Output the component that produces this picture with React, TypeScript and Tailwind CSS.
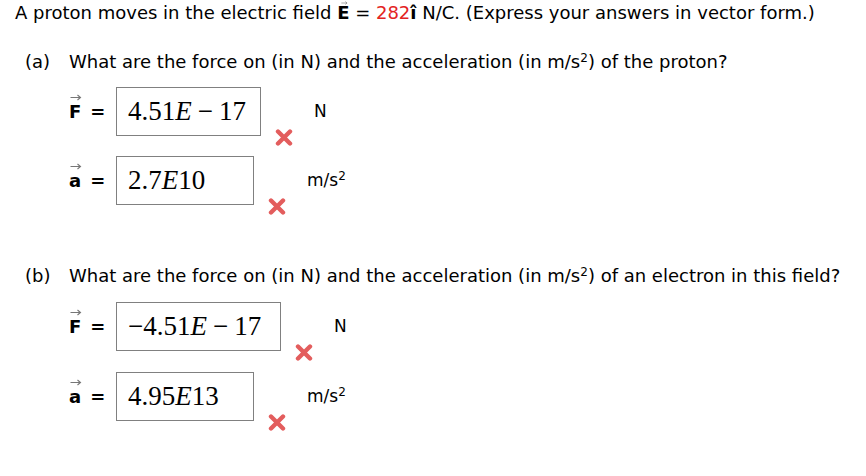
function Arrow({ className }: { className: string }) {
  return (
    <svg viewBox="0 0 12 7" className={`absolute ${className}`}>
      <path d="M0.5 3.5 H10.5 M7.5 1 L10.5 3.5 L7.5 6" stroke="#777" strokeWidth="1.1" fill="none" />
    </svg>
  );
}

function Vec({ letter, arrow = "w-[12px] h-[7px] left-[1px] -top-[4px]" }: { letter: string; arrow?: string }) {
  return (
    <span className="relative inline-block font-bold">
      <Arrow className={arrow} />
      {letter}
    </span>
  );
}

function Cross() {
  return (
    <svg width="18" height="17" viewBox="0 0 18 17" className="block">
      <path d="M3 2.5 L15 14.5 M15 2.5 L3 14.5" stroke="#e35d5d" strokeWidth="4.4" strokeLinecap="round" />
    </svg>
  );
}

function Answer({
  sym,
  value,
  width,
  unit,
}: {
  sym: string;
  value: React.ReactNode;
  width: string;
  unit: React.ReactNode;
}) {
  return (
    <div className="flex items-center h-[49px] pl-[69px]">
      <div className="flex items-center w-[47px] text-[18px]">
        <Vec letter={sym} />
        <span className="ml-[9px] font-bold">=</span>
      </div>
      <div
        className={`${width} h-[49px] border border-[#808080] flex items-center pl-[11px] text-[27px] font-['Liberation_Serif',serif] leading-none`}
      >
        {value}
      </div>
      <div className="self-end translate-y-[10px] ml-[14px]">
        <Cross />
      </div>
      <div className="ml-[21px] text-[17px]">{unit}</div>
    </div>
  );
}

function Num({ mant, exp, neg }: { mant: string; exp: string; neg?: boolean }) {
  return (
    <span>
      {mant}
      <i>E</i>
      {neg && <span className="mx-[6px]">−</span>}
      {exp}
    </span>
  );
}

const ms2 = (
  <span>
    m/s<sup className="text-[12px]">2</sup>
  </span>
);

export default function App() {
  return (
    <div className="w-[866px] h-[476px] bg-white text-black font-['DejaVu_Sans',Verdana,sans-serif] text-[18px] pt-[2px]">
      <p className="pl-[15px] leading-[22px]">
        A proton moves in the electric field{" "}
        <Vec letter="E" arrow="w-[7px] h-[4px] left-[4px] -top-[1px]" /> = <span className="text-[#e32323]">282</span>
        <b>î</b> N/C. (Express your answers in vector form.)
      </p>

      <div className="flex mt-[27px] leading-[22px]">
        <span className="pl-[25px] w-[69px]">(a)</span>
        <span>
          What are the force on (in N) and the acceleration (in m/s<sup className="text-[12px]">2</sup>) of the proton?
        </span>
      </div>

      <div className="mt-[14px]">
        <Answer sym="F" width="w-[145px]" value={<Num mant="4.51" exp="17" neg />} unit="N" />
      </div>
      <div className="mt-[20px]">
        <Answer sym="a" width="w-[138px]" value={<Num mant="2.7" exp="10" />} unit={ms2} />
      </div>

      <div className="flex mt-[60px] leading-[22px]">
        <span className="pl-[25px] w-[69px]">(b)</span>
        <span>
          What are the force on (in N) and the acceleration (in m/s<sup className="text-[12px]">2</sup>) of an electron in this field?
        </span>
      </div>

      <div className="mt-[15px]">
        <Answer sym="F" width="w-[165px]" value={<Num mant="−4.51" exp="17" neg />} unit="N" />
      </div>
      <div className="mt-[21px]">
        <Answer sym="a" width="w-[138px]" value={<Num mant="4.95" exp="13" />} unit={ms2} />
      </div>
    </div>
  );
}
